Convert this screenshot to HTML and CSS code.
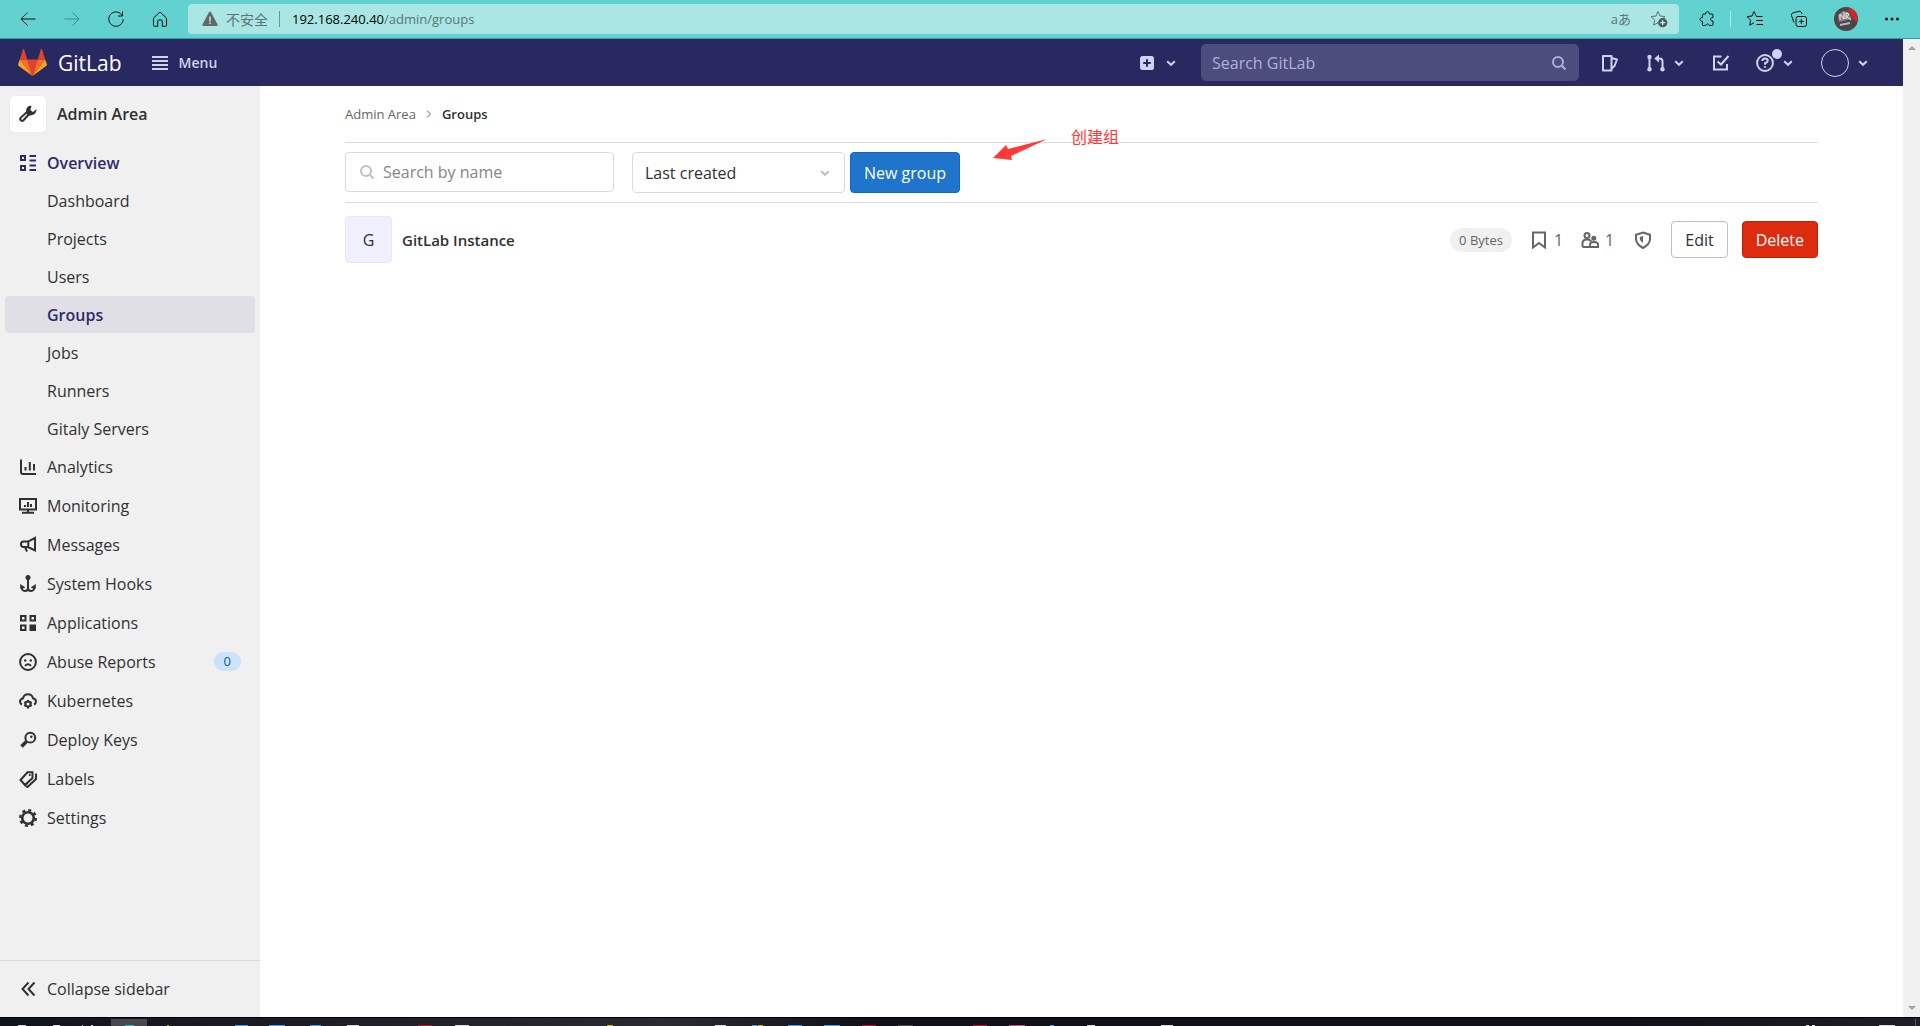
FILE: index.html
```html
<!DOCTYPE html>
<html lang="en">
<head>
<meta charset="utf-8">
<title>Groups · Admin Area · GitLab</title>
<link rel="stylesheet" href="styles.css">
</head>
<body>
<div class="browser">
  <button class="tool tool-back" aria-label="Back"><svg class="i16" viewBox="0 0 16 16"><path d="M15.500 8H1M7.500 1.500 1 8l6.500 6.500"/></svg></button>
  <button class="tool tool-dim" aria-label="Forward" disabled><svg class="i16" viewBox="0 0 16 16"><path d="M.5 8H15M8.500 1.500 15 8l-6.500 6.500"/></svg></button>
  <button class="tool" aria-label="Reload"><svg class="i16" viewBox="0 0 16 16"><path d="M14.500 5A7.200 7.200 0 1 0 15.200 8M14.500.5V5H10"/></svg></button>
  <button class="tool" aria-label="Home"><svg class="i16" viewBox="0 0 16 16"><path d="M1.500 7 8 1l6.500 6v7.500q0 .8-.8.8H10.300V10q0-1-1-1H6.700q-1 0-1 1v5.300H2.300q-.8 0-.8-.8z"/></svg></button>
  <div class="address">
    <svg class="i16" viewBox="0 0 16 16"><path class="warn" d="M7 1.300q1-1.500 2 0l6.500 12q.6 1.700-1 1.700h-13q-1.600 0-1-1.700z"/><path d="M8 5.500v5M8 11.500v1.500" stroke="#a9e6e4" stroke-width="1.600"/></svg>
    <span class="insecure">不安全</span>
    <span class="divider"></span>
    <span class="url"><b>192.168.240.40</b>/admin/groups</span>
    <span class="translate">aあ</span>
    <button class="star" aria-label="Add to favorites"><svg class="i18" viewBox="0 0 18 18"><path d="M8 1.500 10 6l5 .6-3.600 3.500M8 1.500 6 6l-5 .6 3.700 3.400-1 5L8 12.700" stroke="#5b7474"/><circle cx="12.700" cy="12.700" r="4.600" fill="#4c5a5a" stroke="none"/><path d="M12.700 10.200v5M10.200 12.700h5" stroke="#c8efee" stroke-width="1.300"/></svg></button>
  </div>
  <div class="extensions">
    <button class="tool" aria-label="Extensions"><svg class="i16" viewBox="0 0 16 16"><path d="M4.500 3h2.200c-.7-3 4.300-3 3.600 0H13q1 0 1 1v2.600c-3.200-.4-3.200 3.800 0 3.400V13.500q0 1-1 1h-2.700c-.3-2-3.300-2-3.600 0H4.500q-1 0-1-1V10.300C.2 10.500.2 6.200 3.500 6.400V4q0-1 1-1z"/></svg></button>
    <span class="divider divider-light"></span>
    <button class="tool" aria-label="Favorites"><svg class="i18" viewBox="0 0 18 18"><path d="M16.500 6.500h-6L8 1.500 6 6l-5 .6 3.700 3.600-1 5L8 12.800M10 10.500h7M10.500 14.500H17"/></svg></button>
    <button class="tool" aria-label="Collections"><svg class="i18" viewBox="0 0 18 18"><rect x="6" y="6.500" width="10.500" height="10" rx="2"/><path d="M11.300 9v5M8.800 11.500h5M4 12.500 1.500 5.500Q1 3.500 3 2.800L9 1.300Q11 1 11.800 3l.3 1"/></svg></button>
    <span class="profile"><svg viewBox="0 0 24 24"><circle cx="12" cy="12" r="12" fill="#4b4648"/><path d="M15 .5q8 3 9 11.500l-2 3L14 3z" fill="#e01f26"/><path d="m4 8 5-4 5 1 4 7-13 3z" fill="#8e8184"/><path d="m6 13V7l4 5V5M12 12V6l3 1-2 3 4 3" fill="none" stroke="#eee"/><path d="m6 18 10-2" stroke="#bbb" stroke-width="2"/></svg></span>
    <button class="tool" aria-label="Settings and more"><svg class="i16" viewBox="0 0 16 16"><g fill="#111" stroke="none"><circle cx="2.500" cy="8" r="1.500"/><circle cx="8" cy="8" r="1.500"/><circle cx="13.500" cy="8" r="1.500"/></g></svg></button>
  </div>
</div>

<div class="viewport">
  <div class="page">
    <header class="navbar">
      <a class="brand" href="#"><svg class="tanuki" viewBox="0 0 28 28"><path fill="#e24329" d="m14 27 5.100-16H8.900z"/><path fill="#fc6d26" d="M14 27 8.900 11H1.700z"/><path fill="#fca326" d="m1.700 11-1.600 5q-.2.700.4 1.200L14 27z"/><path fill="#e24329" d="M1.700 11h7.200L5.800 1.200q-.4-.8-.9 0z"/><path fill="#fc6d26" d="m14 27 5.100-16h7.200z"/><path fill="#fca326" d="m26.300 11 1.600 5q.2.700-.4 1.200L14 27z"/><path fill="#e24329" d="M26.300 11h-7.200l3.100-9.800q.4-.8.900 0z"/></svg><span>GitLab</span></a>
      <button class="menu"><svg class="i16" viewBox="0 0 16 16"><path d="M0 2h16M0 6h16M0 10h16M0 14h16"/></svg>Menu</button>
      <div class="nav-right">
        <button class="nav-btn nav-new" aria-label="Create new"><svg class="i14" viewBox="0 0 14 14"><rect width="14" height="14" rx="2.500" fill="#d1d1f0" stroke="none"/><path d="M7 3.200v7.600M3.200 7h7.600" stroke="#292961" stroke-width="2"/></svg><svg class="chev" viewBox="0 0 10 10"><path d="m1.200 3.200 3.800 3.600 3.800-3.600"/></svg></button>
        <label class="nav-search"><input type="text" placeholder="Search GitLab" aria-label="Search GitLab"><svg class="i16" viewBox="0 0 16 16"><circle cx="7" cy="7" r="5"/><path d="m10.800 10.800 3.700 3.700"/></svg></label>
        <button class="nav-btn" aria-label="Issues"><svg class="i18" viewBox="0 0 18 18"><path d="M2 2h8.500v14.500H2zM10.500 4 16 5.500 13.500 12l-3 2.500" stroke-linejoin="round"/></svg></button>
        <button class="nav-btn nav-mr" aria-label="Merge requests"><svg class="i18" viewBox="0 0 18 18"><path d="M2.500 3v12M10 4.500h2.500q3 0 3 3V15"/><g fill="#d1d1f0" stroke="none"><path d="M7.200 4.500 12 .5v8z"/><circle cx="2.500" cy="2.900" r="2.200"/><circle cx="2.500" cy="15.200" r="2.200"/><circle cx="15.500" cy="15.200" r="2.200"/></g></svg><svg class="chev" viewBox="0 0 10 10"><path d="m1.200 3.200 3.800 3.600 3.800-3.600"/></svg></button>
        <button class="nav-btn nav-todo" aria-label="To-Do List"><svg class="i18" viewBox="0 0 18 18"><path d="M9.500 2.500H2v13h13V10M5.500 7.500 9 10.500l7.500-8.500"/></svg></button>
        <button class="nav-btn nav-help" aria-label="Help"><svg class="i18" viewBox="0 0 18 18"><circle cx="9" cy="9" r="7.900"/><path d="M6.300 7q.2-2.600 2.800-2.600T11.700 6.800Q11.700 8.400 9 9.300v1.500"/><circle cx="9" cy="13" r="1.100" fill="#d1d1f0" stroke="none"/></svg><span class="dot"></span><svg class="chev" viewBox="0 0 10 10"><path d="m1.200 3.200 3.800 3.600 3.800-3.600"/></svg></button>
        <button class="nav-btn nav-user" aria-label="Account"><span class="user-ring"></span><svg class="chev" viewBox="0 0 10 10"><path d="m1.200 3.200 3.800 3.600 3.800-3.600"/></svg></button>
      </div>
    </header>

    <div class="layout">
      <nav class="sidebar">
        <a class="context" href="#"><span class="context-icon"><svg class="side-icon" viewBox="0 0 18 18"><path d="M9.700 9.500 4.500 15.200a1.800 1.800 0 0 1-2.700-2.600L8 7" /><path d="M12.500.8Q8.300.2 7.200 4.700L7 8l3 2.700 3.500-.8q3.900-1 4.100-5.700l-3.800 2.800-2.400-2z" fill="#303030" stroke="none"/></svg></span>Admin Area</a>
        <ul class="nav-list">
          <li><a class="item item-open" href="#"><svg class="side-icon" viewBox="0 0 18 18"><path d="M2 2h4v4H2zM2 12h4v4H2zM10.500 2H17M10.500 6.500H17M10.500 11.500H17M10.500 16H17"/></svg>Overview</a>
            <ul class="sub-list">
              <li><a href="#">Dashboard</a></li>
              <li><a href="#">Projects</a></li>
              <li><a href="#">Users</a></li>
              <li><a class="active" href="#">Groups</a></li>
              <li><a href="#">Jobs</a></li>
              <li><a href="#">Runners</a></li>
              <li><a href="#">Gitaly Servers</a></li>
            </ul>
          </li>
          <li><a class="item" href="#"><svg class="side-icon" viewBox="0 0 18 18"><path d="M2 1.500V14q0 2 2 2h13M6.500 9v3.500M10.800 4v8.500M15 6v6.500"/></svg>Analytics</a></li>
          <li><a class="item" href="#"><svg class="side-icon" viewBox="0 0 18 18"><path d="M1 2h16v10.500H1zM9 12.500V15M3 15.800h12M6 8V10M9 5v5M12 7v3"/></svg>Monitoring</a></li>
          <li><a class="item" href="#"><svg class="side-icon" viewBox="0 0 18 18"><path d="M16 2v12.500L9 11H4.500Q2 11 2 8.300T4.500 5.600H9zM9.300 5.600V11M6 11l2 4.500"/></svg>Messages</a></li>
          <li><a class="item" href="#"><svg class="side-icon" viewBox="0 0 18 18"><path d="M9 3v10M9 13q0 3-3 3t-3.500-4M9 13q0 3 3 3t3.500-4"/><g fill="#303030" stroke="none"><circle cx="9" cy="2.600" r="2.500"/><path d="m1 9 5.500 3.500L1.500 14zM17 9l-5.500 3.500 5 1.500z"/></g></svg>System Hooks</a></li>
          <li><a class="item" href="#"><svg class="side-icon" viewBox="0 0 18 18"><path d="M2 2h4.500v4.500H2zM11.500 2H16v4.500h-4.500zM2 11.500h4.500V16H2z"/><path d="M11.500 11.500H16V16h-4.500z" fill="#303030"/></svg>Applications</a></li>
          <li><a class="item" href="#"><svg class="side-icon" viewBox="0 0 18 18"><circle cx="9" cy="9" r="7.900"/><path d="M6 12.800q3-3.300 6 0"/><g fill="#303030" stroke="none"><circle cx="6.200" cy="7.500" r="1.200"/><circle cx="11.800" cy="7.500" r="1.200"/></g></svg>Abuse Reports<span class="count">0</span></a></li>
          <li><a class="item" href="#"><svg class="side-icon" viewBox="0 0 18 18"><path d="M3 12.500Q1 11.500 1 9.400T4 6.300Q5 2.300 9 2.300t5 4q3 .9 3 3.100t-2 3.100"/><circle cx="9" cy="12" r="2.600"/><path d="M9 8v1.500M9 14.500V16.500M5.300 10l1.300.8M11.400 13.200l1.300.8M5.300 14l1.300-.8M11.400 10.800l1.300-.8"/></svg>Kubernetes</a></li>
          <li><a class="item" href="#"><svg class="side-icon" viewBox="0 0 18 18"><circle cx="11.300" cy="6.700" r="4.900"/><circle cx="12.300" cy="5.800" r="1.300" fill="#303030" stroke="none"/><path d="m7.500 10.500-5 5" stroke-width="3.600"/></svg>Deploy Keys</a></li>
          <li><a class="item" href="#"><svg class="side-icon" viewBox="0 0 18 18"><path d="M1.500 10 8.500 2.300h5V8l-7.500 7zM6 15l2.500 2L17 9V3.500M13.500 8l-7 6.800"/><circle cx="10.800" cy="5" r="1.100" fill="#303030" stroke="none"/></svg>Labels</a></li>
          <li><a class="item" href="#"><svg class="side-icon" viewBox="0 0 18 18"><circle cx="9" cy="9" r="5.800" stroke-width="2.600"/><circle cx="9" cy="9" r="7.900" stroke-width="2.200" stroke-dasharray="3.100 3.100"/></svg>Settings</a></li>
        </ul>
        <button class="collapse"><svg class="side-icon" viewBox="0 0 18 18"><path d="M9.500 2.500 3.500 9l6 6.500M15.500 2.500 9.500 9l6 6.500"/></svg>Collapse sidebar</button>
      </nav>

      <main class="content">
        <div class="container">
          <div class="crumbs"><a href="#">Admin Area</a><svg class="crumb-sep" viewBox="0 0 10 10"><path d="m3 1.500 3.500 3.500L3 8.500"/></svg><a class="current" href="#">Groups</a></div>
          <div class="toolbar">
            <label class="filter"><svg class="i16" viewBox="0 0 16 16"><circle cx="7" cy="7" r="5"/><path d="m10.800 10.800 3.700 3.700"/></svg><input type="text" placeholder="Search by name" aria-label="Search by name"></label>
            <div class="sort"><select aria-label="Sort by"><option>Last created</option></select><svg class="chev" viewBox="0 0 10 10"><path d="m1.200 3.200 3.800 3.600 3.800-3.600"/></svg></div>
            <button class="btn btn-confirm">New group</button>
            <div class="note"><svg viewBox="0 0 56 24"><path d="M55 1 16 11l-2-4L1 20l19 2-1-4z"/></svg><span>创建组</span></div>
          </div>
          <div class="group-row">
            <span class="avatar">G</span>
            <a class="group-name" href="#">GitLab Instance</a>
            <span class="size">0 Bytes</span>
            <span class="stat"><svg class="i18" viewBox="0 0 18 18"><path d="M3 1.500h12V16.500L9 12l-6 4.500z"/></svg>1</span>
            <span class="stat"><svg class="i18" viewBox="0 0 18 18"><circle cx="6" cy="4.500" r="2.500"/><path d="M1.500 16v-4q0-3.500 4.500-3.500 3.500 0 4 2M1.500 16H9v-2.500q0-2.500 4-2.500t4 2.500V16z"/><circle cx="12.800" cy="7.300" r="2.500" fill="#666" stroke="none"/></svg>1</span>
            <span class="shield"><svg class="i18" viewBox="0 0 18 18"><path d="m9 1.500 7 2.200v5Q15.500 13.500 9 17 2.500 13.500 2 8.700v-5z"/><path d="M9 5v7Q6 10 5.800 8V6z" fill="#666" stroke="none"/></svg></span>
            <button class="btn btn-small">Edit</button>
            <button class="btn btn-small btn-danger">Delete</button>
          </div>
        </div>
      </main>
    </div>
  </div>
  <div class="scrollbar"><span class="up"></span><span class="down"></span></div>
</div>

<footer class="taskbar"><svg viewBox="0 0 1920 9" preserveAspectRatio="none"><path fill="#48494d" d="M111 1h36v8h-36z"/><path fill="#5a5b60" d="M1915 1h1v8h-1z"/><path fill="#ddd" d="M18 8h8v1h-8zM53 8h7v1h-7zM82 8h1v1h-1zM91 8h2v1h-2zM347 8h12v1h-12zM455 8h14v1h-14zM715 8h11v1h-11zM1087 8h8v1h-8zM1161 8h12v1h-12zM1806 8h3v1h-3zM1812 8h3v1h-3zM1879 8h16v1h-16z"/><path fill="#3cc4d0" d="M125 8h9v1h-9z"/><path fill="#4a9be0" d="M235 8h13v1h-13zM269 8h16v1h-16zM310 8h11v1h-11zM752 8h5v1h-5zM788 8h14v1h-14zM824 8h16v1h-16zM1050 8h4v1h-4z"/><path fill="#d3b020" d="M167 8h2v1h-2zM607 8h6v1h-6zM758 8h5v1h-5z"/><path fill="#c0102c" d="M418 8h14v1h-14zM862 8h14v1h-14zM973 8h14v1h-14z"/><path fill="#d05a90" d="M1009 8h16v1h-16z"/><path fill="#555" d="M898 8h15v1h-15z"/></svg></footer>
</body>
</html>
```

FILE: styles.css
```css
* { box-sizing: border-box; }

body {
  margin: 0;
  min-height: 100vh;
  display: flex;
  flex-direction: column;
  font-family: "Open Sans", "Noto Sans", "Noto Sans CJK SC", sans-serif;
  font-size: 16px;
  line-height: 20px;
  color: #303030;
  background: #fff;
}

button, input, select { font: inherit; color: inherit; }
button { padding: 0; border: 0; background: none; display: flex; align-items: center; }
a { color: inherit; text-decoration: none; }
ul { list-style: none; margin: 0; padding: 0; }
svg { display: block; flex: none; fill: none; stroke: currentColor; }

.i14 { width: 14px; height: 14px; }
.i16 { width: 16px; height: 16px; }
.i18 { width: 18px; height: 18px; }
.chev { width: 10px; height: 10px; stroke-width: 2; }

/* Browser toolbar */
.browser {
  height: 39px;
  display: flex;
  align-items: center;
  padding: 0 20px 1px;
  gap: 28px;
  background: #62d2d1;
  border-bottom: 1px solid #3f9c9e;
  color: #111;
}
.tool-dim { color: #3c8c8c; }
.address {
  flex: 1;
  height: 30px;
  display: flex;
  align-items: center;
  padding: 0 11px 0 14px;
  margin-left: -8px;
  border-radius: 4px;
  background: #a9e6e4;
  color: #5b7474;
  font-size: 13px;
}
.warn { fill: #666; stroke: none; }
.insecure { margin-left: 8px; font-family: "Noto Sans CJK SC", sans-serif; font-size: 14px; }
.divider { width: 1px; height: 16px; margin: 0 12px 0 11px; background: #6b9896; }
.url { flex: 1; }
.url b { font-weight: 400; color: #000; }
.translate { margin-right: 19px; }
.extensions { display: flex; align-items: center; gap: 26px; margin-left: -8px; }
.divider-light { margin: 0 -11px; background: #b4e9e8; }
.profile svg { width: 24px; height: 24px; stroke: none; }

/* Page and its scrollbar */
.viewport { flex: 1; display: flex; }
.page { flex: 1; display: flex; flex-direction: column; }
.scrollbar {
  width: 17px;
  display: flex;
  flex-direction: column;
  justify-content: space-between;
  align-items: center;
  padding: 7px 0;
  background: #f0f0f0;
}
.up, .down { border: 4px solid transparent; }
.up { border-top: 0; border-bottom-color: #a3a3a3; }
.down { border-bottom: 0; border-top-color: #a3a3a3; }

/* Top navigation */
.navbar {
  height: 47px;
  display: flex;
  align-items: center;
  padding: 0 35px 0 18px;
  background: #292961;
  color: #d1d1f0;
}
.brand { display: flex; align-items: center; gap: 11px; font-size: 21px; color: #fff; }
.tanuki { width: 29px; height: 29px; stroke: none; }
.menu { margin-left: 30px; gap: 11px; font-size: 14px; font-weight: 600; }
.menu svg { stroke-width: 2; }
.nav-right { flex: 1; display: flex; justify-content: flex-end; align-items: center; }
.nav-btn { position: relative; stroke-width: 2; margin-left: 22px; }
.nav-btn .chev { margin-left: 9px; }
.nav-new .chev { margin-left: 12px; }
.nav-search {
  width: 378px;
  height: 37px;
  margin-left: 25px;
  padding: 0 12px 0 11px;
  display: flex;
  align-items: center;
  border-radius: 5px;
  background: #4c4c7d;
  color: #b0b0d8;
}
.nav-search svg { stroke-width: 2; }
.nav-search input, .filter input { flex: 1; min-width: 0; padding: 0; border: 0; background: none; outline: 0; }
.nav-search input::placeholder { color: #b0b0d8; opacity: 1; }
.nav-mr { margin-left: 28px; }
.nav-todo { margin-left: 28px; }
.nav-help { margin-left: 26px; }
.nav-user { margin-left: 28px; }
.dot { position: absolute; top: -5px; left: 16px; width: 10px; height: 10px; border-radius: 50%; background: #d1d1f0; }
.user-ring { width: 28px; height: 28px; border: 1px solid #d1d1f0; border-radius: 50%; }

/* Sidebar */
.layout { flex: 1; display: flex; }
.sidebar { width: 260px; display: flex; flex-direction: column; background: #f0f0f0; }
.side-icon { width: 18px; height: 18px; stroke-width: 2; }
.context { display: flex; align-items: center; gap: 11px; height: 36px; margin: 10px 10px 11px; font-weight: 600; }
.context-icon { width: 36px; height: 36px; display: flex; align-items: center; justify-content: center; border-radius: 4px; background: #fff; box-shadow: 0 0 1px #ccc; }
.nav-list { flex: 1; }
.item { height: 39px; display: flex; align-items: center; gap: 10px; padding: 0 19px; }
.item-open { font-weight: 600; color: #2f2a6b; }
.sub-list { display: grid; gap: 1px; padding: 0 5px; }
.sub-list a { height: 37px; display: flex; align-items: center; padding-left: 42px; border-radius: 4px; }
.sub-list .active { background: #e0dfe5; font-weight: 600; color: #2f2a6b; }
.count { margin-left: auto; padding: 0 10px; border-radius: 10px; background: #cbe2f9; color: #0b5cad; font-size: 13px; line-height: 19px; }
.collapse { height: 57px; gap: 10px; padding-left: 19px; border-top: 1px solid #dbdbdb; }

/* Content */
.content { flex: 1; padding: 0 16px; }
.container { max-width: 1473px; margin: 0 auto; }
.crumbs { height: 57px; display: flex; align-items: center; font-size: 13px; color: #666; border-bottom: 1px solid #dbdbdb; }
.crumb-sep { width: 10px; height: 10px; margin: 0 8px; }
.current { font-weight: 600; color: #303030; }
.toolbar { position: relative; height: 60px; display: flex; align-items: flex-start; padding-top: 9px; border-bottom: 1px solid #dbdbdb; }
.filter { width: 269px; height: 40px; display: flex; align-items: center; gap: 8px; padding: 0 13px; border: 1px solid #dbdbdb; border-radius: 4px; }
.filter svg { color: #bfbfbf; stroke-width: 2; }
.filter input::placeholder { color: #868686; opacity: 1; }
.sort { position: relative; width: 213px; margin: 0 5px 0 18px; }
.sort select { width: 100%; height: 41px; padding: 0 12px; border: 1px solid #dbdbdb; border-radius: 4px; background: #fff; appearance: none; }
.sort .chev { position: absolute; right: 15px; top: 16px; color: #bfbfbf; pointer-events: none; }
.btn { height: 41px; padding: 0 13px; border: 1px solid #bfbfbf; border-radius: 4px; background: #fff; justify-content: center; }
.btn-confirm { min-width: 110px; background: #1f75cb; border-color: #1068bf; color: #fff; }
.note { position: absolute; left: 647px; top: -16px; display: flex; gap: 23px; color: #ff3838; }
.note svg { width: 56px; height: 24px; margin-top: 11px; fill: currentColor; stroke: none; }

.group-row { height: 73px; display: flex; align-items: center; }
.avatar { width: 47px; height: 47px; display: flex; align-items: center; justify-content: center; border: 1px solid #e8e8f0; border-radius: 4px; background: #f1f0ff; }
.group-name { flex: 1; margin-left: 10px; font-size: 15px; font-weight: 600; }
.size { padding: 0 9px; border-radius: 12px; background: #f0f0f0; color: #666; font-size: 13px; line-height: 24px; }
.stat { display: flex; align-items: center; gap: 6px; margin-left: 18px; color: #666; }
.stat svg, .shield svg { stroke-width: 2; color: #666; }
.shield { margin: 0 5px 0 20px; }
.btn-small { height: 37px; min-width: 56px; margin-left: 14px; }
.btn-danger { background: #dd2b0e; border-color: #c91c00; color: #fff; }

/* Desktop taskbar edge */
.taskbar { height: 9px; border-top: 1px solid #000; background: linear-gradient(90deg, #11131c, #2a292f 35%, #101118 45%, #101118 85%, #1e1e24); }
.taskbar svg { width: 100%; height: 8px; stroke: none; }
```
